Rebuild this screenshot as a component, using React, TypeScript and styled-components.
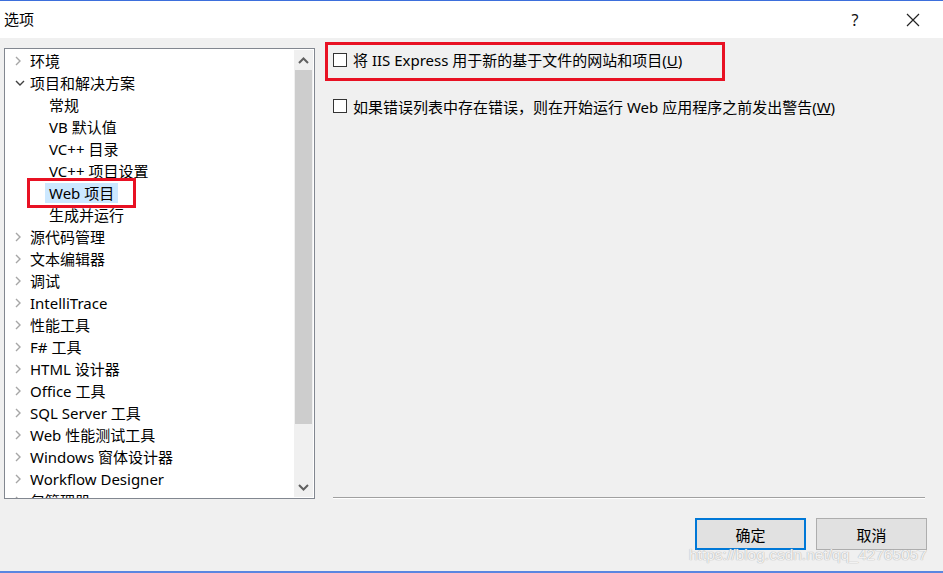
import React from "react";
import styled, { createGlobalStyle } from "styled-components";

const Global = createGlobalStyle`
  html, body { margin: 0; padding: 0; background: #f0f0f0; }
  body { font-family: "Noto Sans", "Noto Sans CJK SC", sans-serif; }
  * { box-sizing: border-box; }
`;

const Window = styled.div`
  position: relative;
  width: 943px;
  height: 573px;
  background: #f0f0f0;
  display: flex;
  flex-direction: column;
  border-top: 1px solid #3d6fdc;
  border-bottom: 2px solid #5a86e0;
  overflow: hidden;
  font-family: "Noto Sans", "Noto Sans CJK SC", sans-serif;
  font-size: 15px;
  color: #000;
`;

const TitleBar = styled.div`
  height: 37px;
  background: #fff;
  display: flex;
  align-items: center;
  padding-left: 4px;
`;

const Title = styled.div`
  flex: 1;
  font-size: 15px;
  margin-top: -2px;
`;

const TitleBtn = styled.div<{ $w: number }>`
  width: ${(p) => p.$w}px;
  height: 37px;
  display: flex;
  align-items: center;
  justify-content: center;
  font-size: 16px;
  color: #111;
`;

const Body = styled.div`
  display: flex;
  align-items: flex-start;
  padding-left: 4px;
`;

const TreePanel = styled.div`
  margin-top: 10px;
  width: 311px;
  height: 451px;
  border: 1px solid #828790;
  background: #fff;
  display: flex;
  overflow: hidden;
`;

const TreeList = styled.div`
  flex: 1;
  padding-top: 1px;
  overflow: hidden;
`;

const Row = styled.div<{ $level: number }>`
  height: 22px;
  display: flex;
  align-items: center;
  padding-left: ${(p) => (p.$level === 0 ? 10 : 44)}px;
  white-space: nowrap;
`;

const Chevron = styled.span`
  width: 15px;
  display: flex;
  align-items: center;
  justify-content: flex-start;
`;

const Label = styled.span<{ $selected?: boolean }>`
  padding: ${(p) => (p.$selected ? "0 4px" : "0")};
  line-height: 20px;
  background: ${(p) => (p.$selected ? "#cce8ff" : "transparent")};
`;

const RedBox = styled.div`
  border: 3px solid #e81123;
  display: inline-flex;
`;

const Scrollbar = styled.div`
  width: 19px;
  margin: 1px 1px 1px 0;
  background: #f0f0f0;
  display: flex;
  flex-direction: column;
`;

const ScrollBtn = styled.div`
  height: 20px;
  display: flex;
  align-items: center;
  justify-content: center;
`;

const Thumb = styled.div`
  height: 354px;
  background: #cdcdcd;
  margin: 0 1px;
`;

const ScrollTrack = styled.div`
  flex: 1;
`;

const RightCol = styled.div`
  margin-top: 4px;
  margin-left: 10px;
  width: 601px;
  height: 457px;
  display: flex;
  flex-direction: column;
`;

const CheckRow = styled.label`
  display: flex;
  align-items: center;
  gap: 6px;
  height: 33px;
  padding-left: 5px;
  padding-right: 40px;
  padding-bottom: 4px;
  white-space: nowrap;
`;

const PlainCheckRow = styled(CheckRow)`
  margin-top: 10px;
  padding-left: 8px;
  padding-bottom: 2px;
  height: 32px;
`;

const Box = styled.span`
  width: 14px;
  height: 14px;
  border: 1px solid #333;
  background: #fff;
  flex: none;
`;

const U = styled.span`
  text-decoration: underline;
`;

const Separator = styled.div`
  margin-top: auto;
  margin-left: 8px;
  width: 592px;
  height: 2px;
  border-top: 1px solid #a0a0a0;
  border-bottom: 1px solid #fff;
`;

const Footer = styled.div`
  display: flex;
  justify-content: flex-end;
  gap: 10px;
  padding-top: 19px;
  padding-right: 16px;
`;

const Button = styled.div<{ $default?: boolean }>`
  width: 111px;
  height: 32px;
  background: #e1e1e1;
  border: ${(p) => (p.$default ? "2px solid #0078d7" : "1px solid #adadad")};
  display: flex;
  align-items: center;
  justify-content: center;
  font-size: 15px;
`;

const Watermark = styled.div`
  position: absolute;
  left: 689px;
  top: 545px;
  font-family: "Liberation Sans", Arial, sans-serif;
  font-size: 15.5px;
  color: rgba(255, 255, 255, 0.85);
  text-shadow: 0 0 1px #b0b0b0, 0 0 1px #b0b0b0;
  white-space: nowrap;
  pointer-events: none;
`;

const Right = () => (
  <svg width="6" height="10" viewBox="0 0 6 10">
    <path d="M1 1 L5 5 L1 9" fill="none" stroke="#a6a6a6" strokeWidth="1.4" />
  </svg>
);

const Down = () => (
  <svg width="10" height="6" viewBox="0 0 10 6">
    <path d="M1 1 L5 5 L9 1" fill="none" stroke="#404040" strokeWidth="1.4" />
  </svg>
);

const ArrowUp = () => (
  <svg width="11" height="7" viewBox="0 0 11 7">
    <path d="M1 6 L5.5 1.5 L10 6" fill="none" stroke="#606060" strokeWidth="2" />
  </svg>
);

const ArrowDown = () => (
  <svg width="11" height="7" viewBox="0 0 11 7">
    <path d="M1 1 L5.5 5.5 L10 1" fill="none" stroke="#606060" strokeWidth="2" />
  </svg>
);

type Item = { label: string; level: number; expanded?: boolean; selected?: boolean };

const items: Item[] = [
  { label: "环境", level: 0 },
  { label: "项目和解决方案", level: 0, expanded: true },
  { label: "常规", level: 1 },
  { label: "VB 默认值", level: 1 },
  { label: "VC++ 目录", level: 1 },
  { label: "VC++ 项目设置", level: 1 },
  { label: "Web 项目", level: 1, selected: true },
  { label: "生成并运行", level: 1 },
  { label: "源代码管理", level: 0 },
  { label: "文本编辑器", level: 0 },
  { label: "调试", level: 0 },
  { label: "IntelliTrace", level: 0 },
  { label: "性能工具", level: 0 },
  { label: "F# 工具", level: 0 },
  { label: "HTML 设计器", level: 0 },
  { label: "Office 工具", level: 0 },
  { label: "SQL Server 工具", level: 0 },
  { label: "Web 性能测试工具", level: 0 },
  { label: "Windows 窗体设计器", level: 0 },
  { label: "Workflow Designer", level: 0 },
  { label: "包管理器", level: 0 },
];

const SelectedWrap = styled.div`
  margin-left: -22px;
  display: flex;
  align-items: center;
`;

const RedFrame = styled.div`
  border: 3px solid #e81123;
  padding: 2px 15px 2px 15px;
  display: flex;
  align-items: center;
`;

export default function App() {
  return (
    <Window>
      <Global />
      <TitleBar>
        <Title>选项</Title>
        <TitleBtn $w={56}>?</TitleBtn>
        <TitleBtn $w={60}>
          <svg width="14" height="14" viewBox="0 0 14 14">
            <path d="M1 1 L13 13 M13 1 L1 13" stroke="#222" strokeWidth="1.2" />
          </svg>
        </TitleBtn>
      </TitleBar>
      <Body>
        <TreePanel>
          <TreeList>
            {items.map((it) =>
              it.selected ? (
                <Row key={it.label} $level={it.level}>
                  <SelectedWrap>
                    <RedFrame>
                      <Label $selected>{it.label}</Label>
                    </RedFrame>
                  </SelectedWrap>
                </Row>
              ) : (
                <Row key={it.label} $level={it.level}>
                  {it.level === 0 && <Chevron>{it.expanded ? <Down /> : <Right />}</Chevron>}
                  <Label>{it.label}</Label>
                </Row>
              )
            )}
          </TreeList>
          <Scrollbar>
            <ScrollBtn>
              <ArrowUp />
            </ScrollBtn>
            <Thumb />
            <ScrollTrack />
            <ScrollBtn>
              <ArrowDown />
            </ScrollBtn>
          </Scrollbar>
        </TreePanel>
        <RightCol>
          <div>
            <RedBox>
              <CheckRow>
                <Box />
                <span>
                  将 IIS Express 用于新的基于文件的网站和项目(<U>U</U>)
                </span>
              </CheckRow>
            </RedBox>
          </div>
          <PlainCheckRow>
            <Box />
            <span>
              如果错误列表中存在错误，则在开始运行 Web 应用程序之前发出警告(<U>W</U>)
            </span>
          </PlainCheckRow>
          <Separator />
        </RightCol>
      </Body>
      <Footer>
        <Button $default>确定</Button>
        <Button>取消</Button>
      </Footer>
      <Watermark>https://blog.csdn.net/qq_42765057</Watermark>
    </Window>
  );
}
